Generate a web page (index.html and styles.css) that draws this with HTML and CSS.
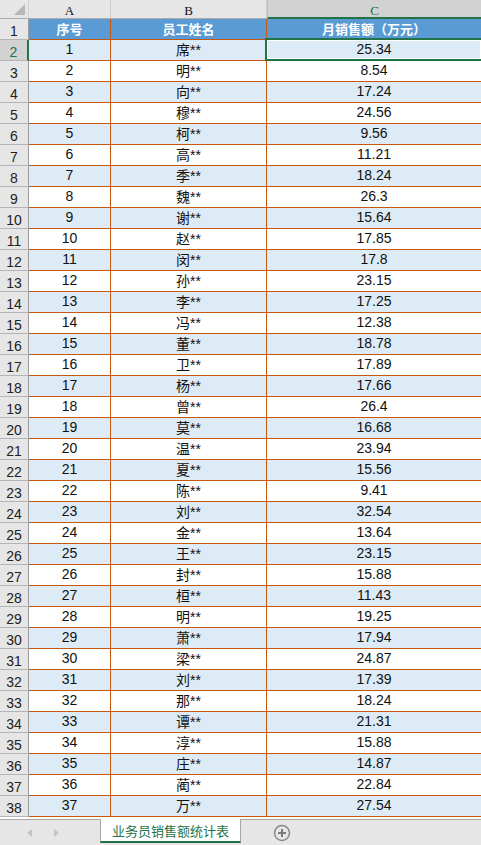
FILE: index.html
```html
<!DOCTYPE html>
<html lang="zh-CN">
<head>
<meta charset="utf-8">
<title>业务员销售额统计表</title>
<link rel="stylesheet" href="styles.css">
</head>
<body>
<div class="app">
  <div class="sheet">
    <div class="corner"><span class="tri"></span></div>
    <div class="colhead">A</div>
    <div class="colhead">B</div>
    <div class="colhead sel">C</div>

    <div class="rowhead">1</div><div class="cell hd">序号</div><div class="cell hd">员工姓名</div><div class="cell hd">月销售额（万元）</div>
    <div class="rowhead sel">2</div><div class="cell alt">1</div><div class="cell alt">席**</div><div class="cell alt active">25.34</div>
    <div class="rowhead">3</div><div class="cell">2</div><div class="cell">明**</div><div class="cell">8.54</div>
    <div class="rowhead">4</div><div class="cell alt">3</div><div class="cell alt">向**</div><div class="cell alt">17.24</div>
    <div class="rowhead">5</div><div class="cell">4</div><div class="cell">穆**</div><div class="cell">24.56</div>
    <div class="rowhead">6</div><div class="cell alt">5</div><div class="cell alt">柯**</div><div class="cell alt">9.56</div>
    <div class="rowhead">7</div><div class="cell">6</div><div class="cell">高**</div><div class="cell">11.21</div>
    <div class="rowhead">8</div><div class="cell alt">7</div><div class="cell alt">季**</div><div class="cell alt">18.24</div>
    <div class="rowhead">9</div><div class="cell">8</div><div class="cell">魏**</div><div class="cell">26.3</div>
    <div class="rowhead">10</div><div class="cell alt">9</div><div class="cell alt">谢**</div><div class="cell alt">15.64</div>
    <div class="rowhead">11</div><div class="cell">10</div><div class="cell">赵**</div><div class="cell">17.85</div>
    <div class="rowhead">12</div><div class="cell alt">11</div><div class="cell alt">闵**</div><div class="cell alt">17.8</div>
    <div class="rowhead">13</div><div class="cell">12</div><div class="cell">孙**</div><div class="cell">23.15</div>
    <div class="rowhead">14</div><div class="cell alt">13</div><div class="cell alt">李**</div><div class="cell alt">17.25</div>
    <div class="rowhead">15</div><div class="cell">14</div><div class="cell">冯**</div><div class="cell">12.38</div>
    <div class="rowhead">16</div><div class="cell alt">15</div><div class="cell alt">董**</div><div class="cell alt">18.78</div>
    <div class="rowhead">17</div><div class="cell">16</div><div class="cell">卫**</div><div class="cell">17.89</div>
    <div class="rowhead">18</div><div class="cell alt">17</div><div class="cell alt">杨**</div><div class="cell alt">17.66</div>
    <div class="rowhead">19</div><div class="cell">18</div><div class="cell">曾**</div><div class="cell">26.4</div>
    <div class="rowhead">20</div><div class="cell alt">19</div><div class="cell alt">莫**</div><div class="cell alt">16.68</div>
    <div class="rowhead">21</div><div class="cell">20</div><div class="cell">温**</div><div class="cell">23.94</div>
    <div class="rowhead">22</div><div class="cell alt">21</div><div class="cell alt">夏**</div><div class="cell alt">15.56</div>
    <div class="rowhead">23</div><div class="cell">22</div><div class="cell">陈**</div><div class="cell">9.41</div>
    <div class="rowhead">24</div><div class="cell alt">23</div><div class="cell alt">刘**</div><div class="cell alt">32.54</div>
    <div class="rowhead">25</div><div class="cell">24</div><div class="cell">金**</div><div class="cell">13.64</div>
    <div class="rowhead">26</div><div class="cell alt">25</div><div class="cell alt">王**</div><div class="cell alt">23.15</div>
    <div class="rowhead">27</div><div class="cell">26</div><div class="cell">封**</div><div class="cell">15.88</div>
    <div class="rowhead">28</div><div class="cell alt">27</div><div class="cell alt">桓**</div><div class="cell alt">11.43</div>
    <div class="rowhead">29</div><div class="cell">28</div><div class="cell">明**</div><div class="cell">19.25</div>
    <div class="rowhead">30</div><div class="cell alt">29</div><div class="cell alt">萧**</div><div class="cell alt">17.94</div>
    <div class="rowhead">31</div><div class="cell">30</div><div class="cell">梁**</div><div class="cell">24.87</div>
    <div class="rowhead">32</div><div class="cell alt">31</div><div class="cell alt">刘**</div><div class="cell alt">17.39</div>
    <div class="rowhead">33</div><div class="cell">32</div><div class="cell">那**</div><div class="cell">18.24</div>
    <div class="rowhead">34</div><div class="cell alt">33</div><div class="cell alt">谭**</div><div class="cell alt">21.31</div>
    <div class="rowhead">35</div><div class="cell">34</div><div class="cell">淳**</div><div class="cell">15.88</div>
    <div class="rowhead">36</div><div class="cell alt">35</div><div class="cell alt">庄**</div><div class="cell alt">14.87</div>
    <div class="rowhead">37</div><div class="cell">36</div><div class="cell">蔺**</div><div class="cell">22.84</div>
    <div class="rowhead">38</div><div class="cell alt">37</div><div class="cell alt">万**</div><div class="cell alt">27.54</div>
  </div>

  <div class="tabs">
    <div class="nav">
      <span class="arrow left"></span>
      <span class="arrow right"></span>
    </div>
    <div class="tab">业务员销售额统计表</div>
    <div class="rest">
      <svg class="plus" width="18" height="18" viewBox="0 0 18 18">
        <circle cx="9" cy="9" r="7.5" fill="none" stroke="#8a8a8a" stroke-width="1.5"/>
        <path d="M9 5v8M5 9h8" stroke="#7a7a7a" stroke-width="2"/>
      </svg>
    </div>
  </div>
</div>
</body>
</html>
```

FILE: styles.css
```css
html, body {
  margin: 0;
  padding: 0;
  background: #ffffff;
  overflow: hidden;
}

.app {
  width: 481px;
  height: 845px;
  display: flex;
  flex-direction: column;
  font-family: "Liberation Sans", "Noto Sans CJK SC", sans-serif;
}

.sheet {
  height: 819px;
  flex: none;
  overflow: hidden;
  display: grid;
  grid-template-columns: 29px 82px 156px 1fr;
  grid-template-rows: 19px repeat(38, 21px);
  align-content: start;
}

.sheet > div {
  box-sizing: border-box;
  display: flex;
  align-items: center;
  justify-content: center;
  min-width: 0;
}

.corner {
  background: #e6e6e6;
  border-bottom: 1px solid #ababab;
  border-right: 1px solid #d4d4d4;
  position: relative;
}

.tri {
  position: absolute;
  right: 3px;
  bottom: 3px;
  width: 0;
  height: 0;
  border-left: 11px solid transparent;
  border-bottom: 11px solid #b8b8b8;
}

.colhead {
  background: #e6e6e6;
  border-bottom: 1px solid #ababab;
  border-right: 1px solid #cdcdcd;
  font-family: "Liberation Serif", serif;
  font-size: 13px;
  color: #111;
  padding-top: 4px;
}

.colhead.sel {
  background: #d2d2d2;
  color: #217346;
  border-left: 1px solid #bdbdbd;
  border-bottom: 2px solid #217346;
  border-right: none;
}

.rowhead {
  background: #e6e6e6;
  border-bottom: 1px solid #b4b4b4;
  border-right: 1px solid #9b9b9b;
  font-size: 14px;
  color: #222;
  padding-top: 4px;
}

.rowhead.sel {
  background: #d2d2d2;
  color: #217346;
  border-right: 2px solid #217346;
}

.cell {
  background: #ffffff;
  border-bottom: 1px solid #c65911;
  border-right: 1px solid #c65911;
  font-size: 14px;
  color: #111;
  padding-bottom: 2px;
  white-space: nowrap;
}

.cell:nth-child(4n) {
  border-right: none;
}

.cell.alt {
  background: #ddebf7;
}

.cell.hd {
  background: #5b9bd5;
  color: #ffffff;
  font-family: "Noto Sans CJK SC", sans-serif;
  font-weight: bold;
  font-size: 13px;
  padding-bottom: 1px;
}

.cell.active {
  position: relative;
}

.cell.active::after {
  content: "";
  position: absolute;
  left: -2px;
  top: -2px;
  right: -2px;
  bottom: -1px;
  border: 2px solid #217346;
  box-shadow: inset 0 0 0 1px #ffffff;
}

.tabs {
  flex: 1;
  display: flex;
  background: #e6e6e6;
}

.nav {
  width: 100px;
  box-sizing: border-box;
  border-top: 1px solid #a6a6a6;
  display: flex;
  align-items: center;
  padding-left: 27px;
  gap: 22px;
}

.arrow {
  width: 0;
  height: 0;
  border-top: 4px solid transparent;
  border-bottom: 4px solid transparent;
}

.arrow.left {
  border-right: 5px solid #c4c4c4;
}

.arrow.right {
  border-left: 5px solid #c4c4c4;
}

.tab {
  width: 141px;
  box-sizing: border-box;
  background: #ffffff;
  border-left: 1px solid #a6a6a6;
  border-right: 1px solid #a6a6a6;
  border-bottom: 2px solid #217346;
  margin-bottom: 2px;
  display: flex;
  align-items: center;
  justify-content: center;
  font-family: "Noto Sans CJK SC", sans-serif;
  font-size: 13px;
  color: #217346;
  padding-top: 1px;
}

.rest {
  flex: 1;
  box-sizing: border-box;
  border-top: 1px solid #a6a6a6;
  display: flex;
  align-items: center;
  padding-left: 32px;
}

.plus {
  display: block;
}
```
